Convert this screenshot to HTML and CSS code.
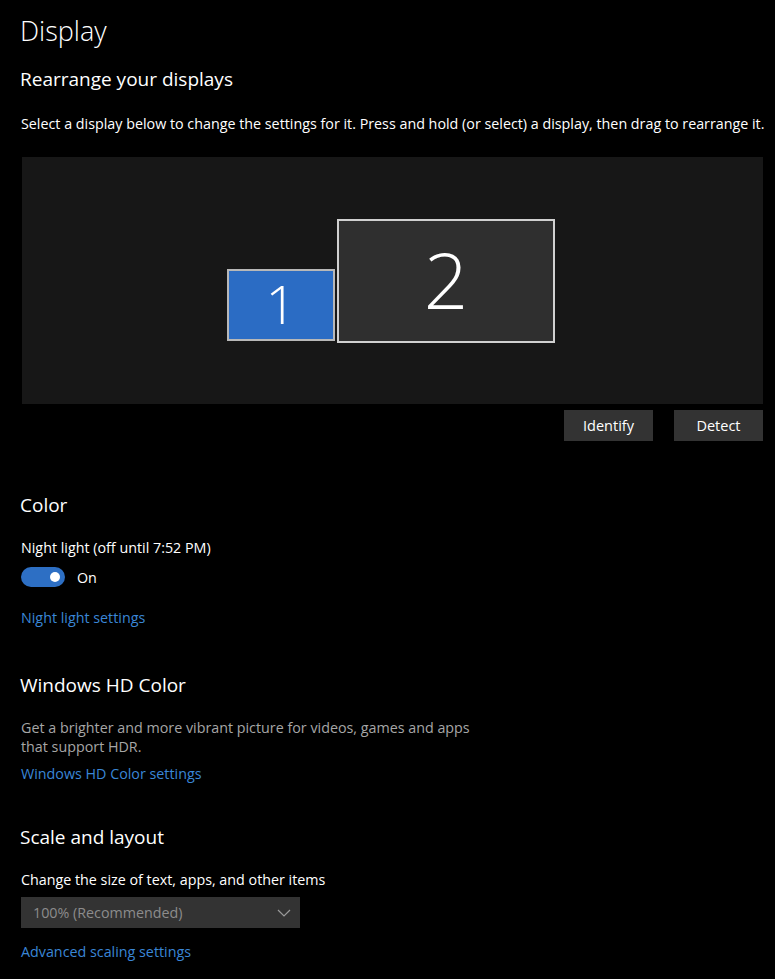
FILE: index.html
```html
<!DOCTYPE html>
<html lang="en">
<head>
<meta charset="utf-8">
<title>Display</title>
<link rel="stylesheet" href="styles.css">
</head>
<body>
<h1 class="title">Display</h1>

<h2 class="heading first">Rearrange your displays</h2>
<p class="desc">Select a display below to change the settings for it. Press and hold (or select) a display, then drag to rearrange it.</p>

<div class="canvas">
  <div class="monitor m1"><span>1</span></div>
  <div class="monitor m2"><span>2</span></div>
</div>
<div class="btn-row">
  <button class="btn">Identify</button>
  <button class="btn">Detect</button>
</div>

<h2 class="heading color-h">Color</h2>
<p class="label">Night light (off until 7:52 PM)</p>
<div class="toggle-row">
  <span class="toggle"><span class="knob"></span></span>
  <span class="toggle-text">On</span>
</div>
<a class="link nl-link">Night light settings</a>

<h2 class="heading hd-h">Windows HD Color</h2>
<p class="sub">Get a brighter and more vibrant picture for videos, games and apps that support HDR.</p>
<a class="link hd-link">Windows HD Color settings</a>

<h2 class="heading scale-h">Scale and layout</h2>
<p class="label">Change the size of text, apps, and other items</p>
<div class="dropdown">
  <span class="dd-text">100% (Recommended)</span>
  <svg class="chev" width="14" height="8" viewBox="0 0 14 8"><path d="M1 1 L7 7 L13 1" fill="none" stroke="#9a9a9a" stroke-width="1.2"/></svg>
</div>
<a class="link adv-link">Advanced scaling settings</a>
</body>
</html>
```

FILE: styles.css
```css
html, body {
  margin: 0;
  padding: 0;
  background: #000;
}
body {
  color: #fff;
  font-family: "Open Sans", "Noto Sans", "Liberation Sans", sans-serif;
  font-size: 14.3px;
  padding: 0 12px 0 21px;
}
.title {
  font-size: 27px;
  font-weight: 300;
  line-height: 40px;
  margin: 11px 0 0 -1px;
}
.heading {
  font-size: 19px;
  font-weight: 400;
  line-height: 28px;
  margin: 0 0 0 -1px;
}
.heading.first { margin-top: 14px; }
.desc {
  margin: 21px 0 0;
  line-height: 20px;
  white-space: nowrap;
}
.canvas {
  position: relative;
  margin: 23px 0 0 1px;
  width: 741px;
  height: 247px;
  background: #171717;
}
.monitor {
  position: absolute;
  box-sizing: border-box;
  display: flex;
  align-items: center;
  justify-content: center;
  font-weight: 300;
  color: #fff;
}
.m1 {
  left: 205px;
  top: 112px;
  width: 108px;
  height: 72px;
  background: #2b6cc4;
  border: 2px solid #b8b8b8;
  font-size: 54px;
}
.m2 {
  left: 315px;
  top: 62px;
  width: 218px;
  height: 124px;
  background: #2f2f2f;
  border: 2px solid #d0d0d0;
  font-size: 78px;
}
.monitor span { line-height: 1; margin-top: -4px; }
.btn-row {
  display: flex;
  justify-content: flex-end;
  gap: 21px;
  width: 742px;
  margin-top: 6px;
}
.btn {
  width: 89px;
  height: 31px;
  border: 0;
  background: #333;
  color: #fff;
  font-family: inherit;
  font-size: 14.5px;
  padding: 0;
}
.color-h { margin-top: 50px; }
.label {
  margin: 19px 0 0;
  line-height: 20px;
}
.toggle-row {
  display: flex;
  align-items: center;
  margin-top: 9px;
  height: 20px;
}
.toggle {
  position: relative;
  display: inline-block;
  width: 44px;
  height: 20px;
  border-radius: 10px;
  background: #2d6fc4;
}
.knob {
  position: absolute;
  right: 5px;
  top: 5px;
  width: 10px;
  height: 10px;
  border-radius: 50%;
  background: #fff;
}
.toggle-text { margin-left: 12px; }
.link {
  display: block;
  color: #3a86d6;
  line-height: 20px;
  cursor: pointer;
}
.nl-link { margin-top: 21px; }
.hd-h { margin-top: 43px; }
.sub {
  margin: 19px 0 0;
  line-height: 19px;
  color: #a6a6a6;
  max-width: 470px;
}
.hd-link { margin-top: 8px; }
.scale-h { margin-top: 39px; }
.dropdown {
  margin-top: 7px;
  width: 279px;
  height: 31px;
  background: #333;
  display: flex;
  align-items: center;
  justify-content: space-between;
  box-sizing: border-box;
  padding: 0 9px 0 12px;
}
.dd-text { color: #8c8c8c; }
.adv-link { margin-top: 14px; }
```
